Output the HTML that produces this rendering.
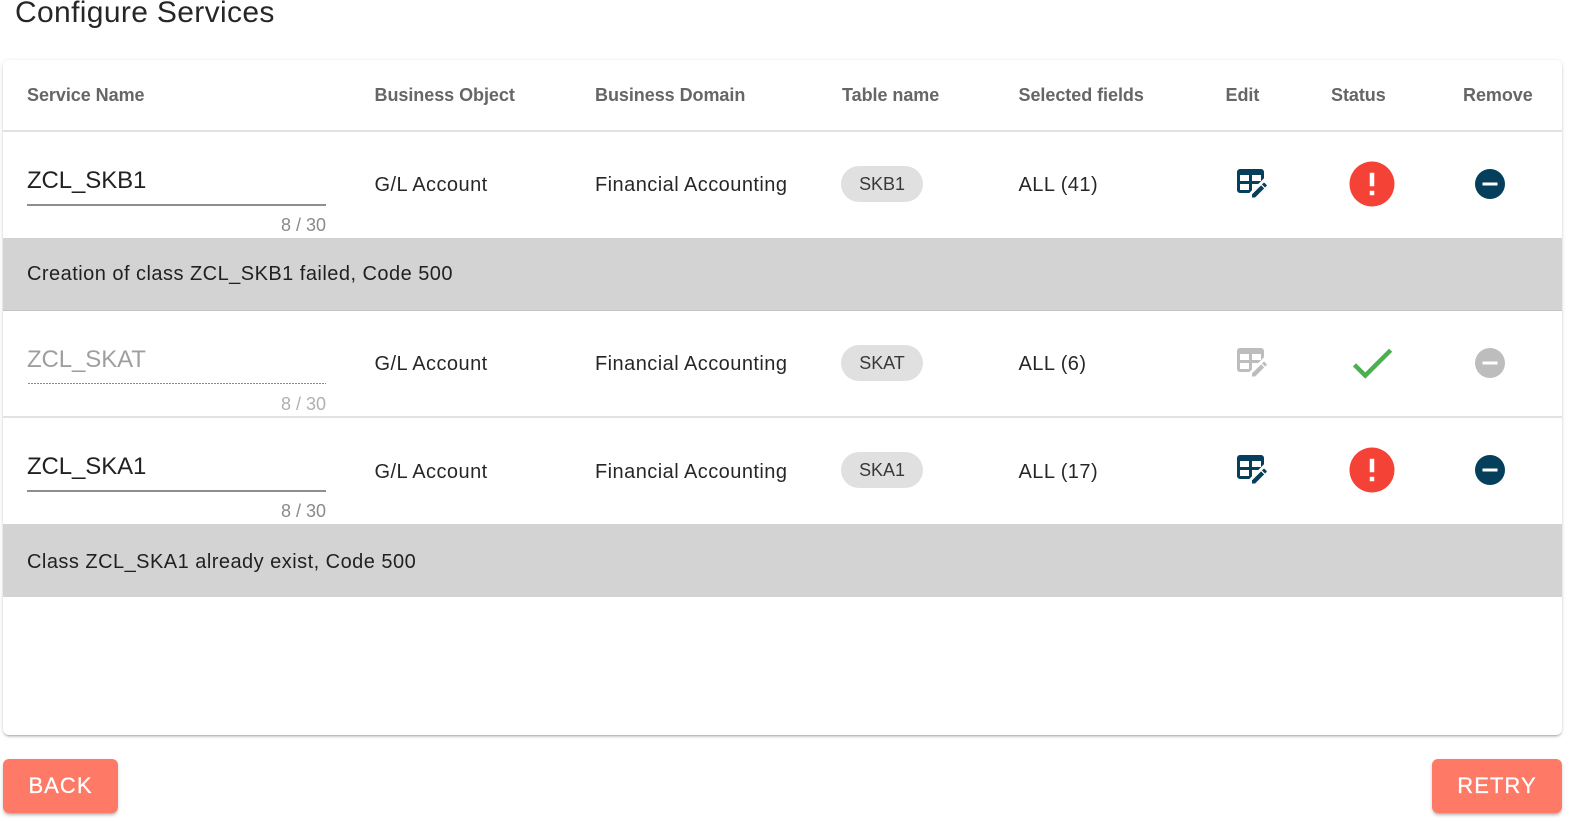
<!DOCTYPE html>
<html><head><meta charset="utf-8">
<style>
html,body{margin:0;padding:0;background:#fff;width:1570px;height:821px;overflow:hidden;font-family:"Liberation Sans",Arial,sans-serif;color:rgba(0,0,0,.87)}
.a{position:absolute;white-space:nowrap}
.card{position:absolute;left:3px;top:60px;width:1559px;height:675px;background:#fff;border-radius:6px;box-shadow:0 2px 2px -1px rgba(0,0,0,.3),0 1px 4px rgba(0,0,0,.14)}
.h{font-weight:700;font-size:18px;color:#666;top:85px;line-height:21px;letter-spacing:-.05px}
.t{font-size:20px;line-height:24px;letter-spacing:.45px;color:rgba(0,0,0,.85)}
.line{position:absolute;left:3px;width:1559px;height:2px;background:#e2e2e2}
.msg{position:absolute;left:3px;width:1559px;height:72px;background:#d3d3d3;font-size:20px;line-height:72px;text-indent:24px;letter-spacing:.47px;color:rgba(0,0,0,.85);overflow:hidden}
.inp{font-size:24px;line-height:30px;letter-spacing:-.1px;color:rgba(0,0,0,.87);left:27px}
.und{position:absolute;left:27px;width:299px;height:1.5px;background:#8f8f8f}
.cnt{font-size:18px;line-height:20px;color:#8a8a8a;left:226px;width:100px;text-align:right}
.chip{position:absolute;left:841px;width:82px;height:36px;border-radius:18px;background:#e0e0e0;text-align:center;font-size:18px;line-height:36px;letter-spacing:-.05px;color:rgba(0,0,0,.75)}
.btn{position:absolute;top:759px;height:54px;background:#ff7a66;border-radius:6px;color:#fff;font-size:22px;letter-spacing:1.05px;text-align:center;line-height:54px;-webkit-text-stroke:.25px #fff;box-shadow:0 3px 3px -2px rgba(0,0,0,.3),0 2px 4px rgba(0,0,0,.15)}
svg{position:absolute;display:block}
</style></head><body>
<div class="a" style="left:15px;top:-5px;font-size:30px;line-height:36px;letter-spacing:.35px;color:rgba(0,0,0,.85)">Configure Services</div>
<div class="card"></div>
<div class="a h" style="left:27px">Service Name</div>
<div class="a h" style="left:374.5px">Business Object</div>
<div class="a h" style="left:595px">Business Domain</div>
<div class="a h" style="left:842px">Table name</div>
<div class="a h" style="left:1018.5px">Selected fields</div>
<div class="a h" style="left:1225.5px">Edit</div>
<div class="a h" style="left:1331px">Status</div>
<div class="a h" style="left:1463px">Remove</div>
<div class="line" style="top:130px"></div>

<div class="a inp" style="top:166px">ZCL_SKB1</div>
<div class="und" style="top:204px"></div>
<div class="a cnt" style="top:215px">8 / 30</div>
<div class="a t" style="left:374.5px;top:173.4px">G/L Account</div>
<div class="a t" style="left:595px;top:173.4px">Financial Accounting</div>
<div class="chip" style="top:166px">SKB1</div>
<div class="a t" style="left:1018.5px;top:173.4px">ALL (41)</div>
<svg style="left:1234px;top:166px" width="36" height="36" viewBox="0 0 24 24" fill="#053f5c"><path d="M21.7,13.35L20.7,14.35L18.65,12.3L19.65,11.3C19.86,11.09 20.21,11.09 20.42,11.3L21.7,12.58C21.91,12.79 21.91,13.14 21.7,13.35M12,18.94L18.06,12.88L20.11,14.93L14.06,21H12V18.94M4,2H18A2,2 0 0,1 20,4V8.17L16.17,12H12V16.17L10.17,18H4A2,2 0 0,1 2,16V4A2,2 0 0,1 4,2M4,6V10H10V6H4M12,6V10H18V6H12M4,12V16H10V12H4Z"/></svg>
<svg style="left:1345px;top:157px" width="54" height="54" viewBox="0 0 24 24" fill="#f44336"><path d="M13,13H11V7H13M13,17H11V15H13M12,2A10,10 0 0,0 2,12A10,10 0 0,0 12,22A10,10 0 0,0 22,12A10,10 0 0,0 12,2Z"/></svg>
<svg style="left:1472px;top:166px" width="36" height="36" viewBox="0 0 24 24" fill="#053f5c"><path d="M17,13H7V11H17M12,2A10,10 0 0,0 2,12A10,10 0 0,0 12,22A10,10 0 0,0 22,12A10,10 0 0,0 12,2Z"/></svg>
<div class="msg" style="top:238px">Creation of class ZCL_SKB1 failed, Code 500</div>

<div class="a inp" style="top:345px;color:rgba(0,0,0,.38)">ZCL_SKAT</div>
<div style="position:absolute;left:28px;width:298px;top:383px;height:1px;background:repeating-linear-gradient(90deg,#8a8a8a 0 2px,transparent 2px 3px)"></div>
<div class="a cnt" style="top:394px;color:#b0b0b0">8 / 30</div>
<div class="a t" style="left:374.5px;top:352px">G/L Account</div>
<div class="a t" style="left:595px;top:352px">Financial Accounting</div>
<div class="chip" style="top:345px">SKAT</div>
<div class="a t" style="left:1018.5px;top:352px">ALL (6)</div>
<svg style="left:1234px;top:345px" width="36" height="36" viewBox="0 0 24 24" fill="#bdbdbd"><path d="M21.7,13.35L20.7,14.35L18.65,12.3L19.65,11.3C19.86,11.09 20.21,11.09 20.42,11.3L21.7,12.58C21.91,12.79 21.91,13.14 21.7,13.35M12,18.94L18.06,12.88L20.11,14.93L14.06,21H12V18.94M4,2H18A2,2 0 0,1 20,4V8.17L16.17,12H12V16.17L10.17,18H4A2,2 0 0,1 2,16V4A2,2 0 0,1 4,2M4,6V10H10V6H4M12,6V10H18V6H12M4,12V16H10V12H4Z"/></svg>
<svg style="left:1345px;top:336px" width="54" height="54" viewBox="0 0 24 24" fill="#4caf50"><path d="M21,7L9,19L3.5,13.5L4.91,12.09L9,16.17L19.59,5.59L21,7Z"/></svg>
<svg style="left:1472px;top:345px" width="36" height="36" viewBox="0 0 24 24" fill="#bdbdbd"><path d="M17,13H7V11H17M12,2A10,10 0 0,0 2,12A10,10 0 0,0 12,22A10,10 0 0,0 22,12A10,10 0 0,0 12,2Z"/></svg>
<div class="line" style="top:310px;background:#c4c4c4;height:1px"></div>
<div class="line" style="top:416px"></div>

<div class="a inp" style="top:452px">ZCL_SKA1</div>
<div class="und" style="top:490px"></div>
<div class="a cnt" style="top:501px">8 / 30</div>
<div class="a t" style="left:374.5px;top:460px">G/L Account</div>
<div class="a t" style="left:595px;top:460px">Financial Accounting</div>
<div class="chip" style="top:452px">SKA1</div>
<div class="a t" style="left:1018.5px;top:460px">ALL (17)</div>
<svg style="left:1234px;top:452px" width="36" height="36" viewBox="0 0 24 24" fill="#053f5c"><path d="M21.7,13.35L20.7,14.35L18.65,12.3L19.65,11.3C19.86,11.09 20.21,11.09 20.42,11.3L21.7,12.58C21.91,12.79 21.91,13.14 21.7,13.35M12,18.94L18.06,12.88L20.11,14.93L14.06,21H12V18.94M4,2H18A2,2 0 0,1 20,4V8.17L16.17,12H12V16.17L10.17,18H4A2,2 0 0,1 2,16V4A2,2 0 0,1 4,2M4,6V10H10V6H4M12,6V10H18V6H12M4,12V16H10V12H4Z"/></svg>
<svg style="left:1345px;top:443px" width="54" height="54" viewBox="0 0 24 24" fill="#f44336"><path d="M13,13H11V7H13M13,17H11V15H13M12,2A10,10 0 0,0 2,12A10,10 0 0,0 12,22A10,10 0 0,0 22,12A10,10 0 0,0 12,2Z"/></svg>
<svg style="left:1472px;top:452px" width="36" height="36" viewBox="0 0 24 24" fill="#053f5c"><path d="M17,13H7V11H17M12,2A10,10 0 0,0 2,12A10,10 0 0,0 12,22A10,10 0 0,0 22,12A10,10 0 0,0 12,2Z"/></svg>
<div class="msg" style="top:524px;line-height:76px;height:73px">Class ZCL_SKA1 already exist, Code 500</div>

<div class="btn" style="left:3px;width:115px">BACK</div>
<div class="btn" style="left:1432px;width:130px">RETRY</div>
</body></html>
